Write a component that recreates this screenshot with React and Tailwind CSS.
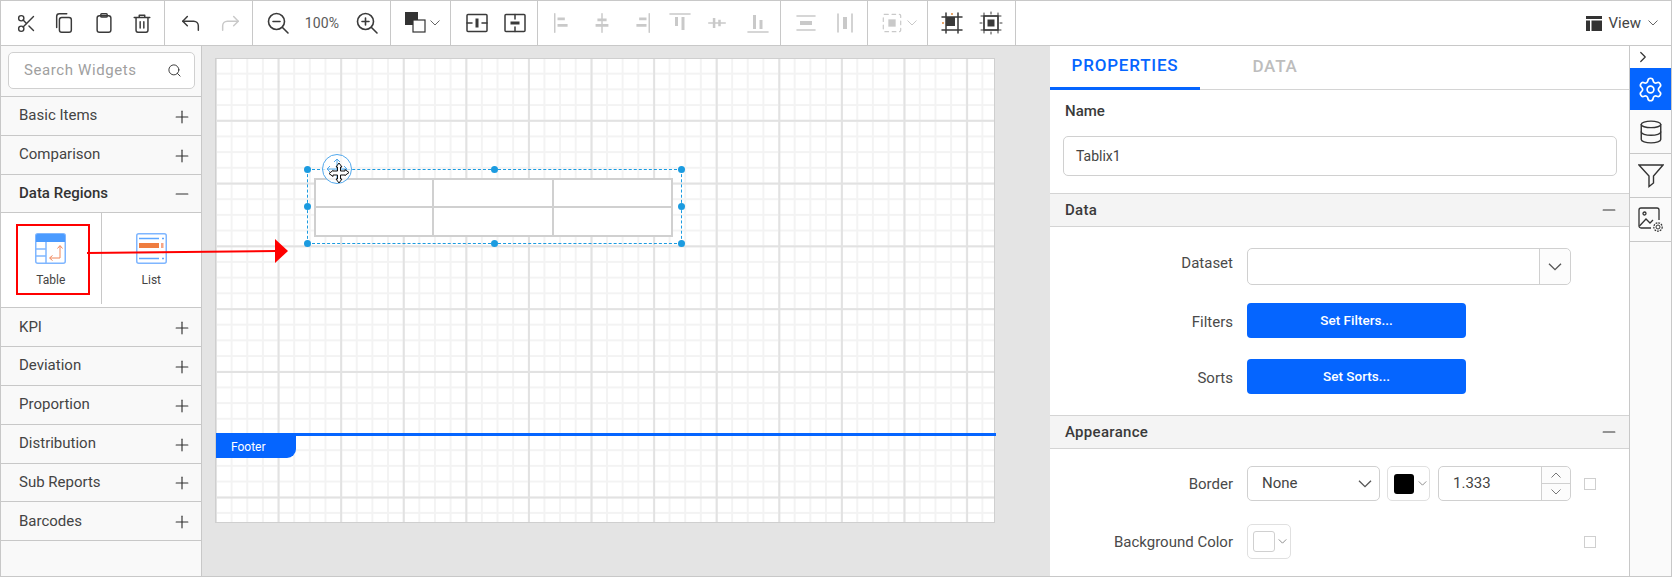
import React from "react";
import { Scissors, ChevronRight, Search, Plus, Minus, Settings, Database } from "lucide-react";

const Svg = ({ size = 24, className = "", children, fill = "none", sw = 1.6 }) => (
  <svg width={size} height={size} viewBox="0 0 24 24" fill={fill} stroke="currentColor" strokeWidth={sw} strokeLinecap="round" strokeLinejoin="round" className={className}>
    {children}
  </svg>
);

const Btn = ({ children, className = "" }) => (
  <div className={`w-[39px] h-full flex items-center justify-center shrink-0 text-[#3a3a3a] ${className}`}>{children}</div>
);

const Off = ({ children }) => <Btn className="text-[#c9c9c9]">{children}</Btn>;

const Group = ({ className, children }) => (
  <div className={`h-full flex items-center shrink-0 border-r border-[#c8c8c8] ${className}`}>{children}</div>
);

const Chev = ({ className = "" }) => (
  <svg width="10" height="6" viewBox="0 0 10 6" fill="none" stroke="currentColor" strokeWidth="1" className={className}>
    <path d="M0.5 0.5 L5 5 L9.5 0.5" />
  </svg>
);

function Toolbar() {
  return (
    <div className="h-[45px] flex border-b border-[#c8c8c8] bg-white shrink-0">
      <Group className="w-[164px] pl-[6px]">
        <Btn><Scissors size={21} strokeWidth={1.6} /></Btn>
        <Btn className="-ml-[2px]"><Svg size={22}><rect x="7" y="6" width="13" height="16" rx="2.5" /><path d="M4 17V5a3 3 0 0 1 3-3h8" /></Svg></Btn>
        <Btn className="ml-px"><Svg size={22}><rect x="4.5" y="4" width="15" height="18" rx="2.5" /><rect x="8.5" y="2" width="7" height="3.5" rx="1" /></Svg></Btn>
        <Btn className="-ml-px"><Svg size={22}><path d="M3.5 6h17M9 6V3.5h6V6M5.5 6v14a2 2 0 0 0 2 2h9a2 2 0 0 0 2-2V6M10 10.5v7M14 10.5v7" /></Svg></Btn>
      </Group>
      <Group className="w-[88px] pl-[6px]">
        <Btn><Svg size={22}><path d="M8 5 L3 10 L8 15" /><path d="M3 10 H15 a5 5 0 0 1 5 5 V20" /></Svg></Btn>
        <Off><Svg size={22}><path d="M16 5 L21 10 L16 15" /><path d="M21 10 H9 a5 5 0 0 0 -5 5 V20" /></Svg></Off>
      </Group>
      <Group className="w-[138px] pl-[5px]">
        <Btn><Svg size={24}><circle cx="10.5" cy="10.5" r="8" /><path d="M7 10.5h7M16.5 16.5L22 22" /></Svg></Btn>
        <div className="w-[50px] text-center text-[14px] tracking-[0.2px] text-[#5a5a5a]">100%</div>
        <Btn><Svg size={24}><circle cx="10.5" cy="10.5" r="8" /><path d="M7 10.5h7M10.5 7v7M16.5 16.5L22 22" /></Svg></Btn>
      </Group>
      <Group className="w-[60px] pl-[14px] gap-[3px]">
        <svg width="22" height="22" viewBox="0 0 22 22" className="shrink-0">
          <rect x="0" y="0" width="13" height="13" fill="#333" />
          <rect x="8" y="8" width="12" height="12" fill="#fff" stroke="#333" strokeWidth="1.2" />
        </svg>
        <Chev className="text-[#666]" />
      </Group>
      <Group className="w-[87px] pl-[6px]">
        <Btn><Svg size={24} sw={1.5}><rect x="2" y="3.5" width="20" height="17" rx="1" /><path d="M2 12h5M17 12h5" /><rect x="10.5" y="7.5" width="3" height="9" fill="currentColor" stroke="none" /></Svg></Btn>
        <Btn className="-ml-px"><Svg size={24} sw={1.5}><rect x="2" y="3.5" width="20" height="17" rx="1" /><path d="M12 3.5v4.5M12 16v4.5" /><rect x="7.5" y="10.5" width="9" height="3" fill="currentColor" stroke="none" /></Svg></Btn>
      </Group>
      <Group className="w-[243px] pl-[5px]">
        <Off><Svg size={22}><path d="M3 2v20" /><path d="M6 7.5h8M6 14.5h11" strokeWidth="3" strokeLinecap="butt" /></Svg></Off>
        <Off><Svg size={22}><path d="M12 2v20" /><path d="M7 8.5h10M5 14.5h14" strokeWidth="3" strokeLinecap="butt" /></Svg></Off>
        <Off><Svg size={22}><path d="M21 2v20" /><path d="M10 7.5h8M7 14.5h11" strokeWidth="3" strokeLinecap="butt" /></Svg></Off>
        <Off><Svg size={24}><path d="M2 3h20" /><path d="M8.5 6v9M15 6v13" strokeWidth="3" strokeLinecap="butt" /></Svg></Off>
        <Btn className="-ml-[2px] text-[#c9c9c9]"><Svg size={20}><path d="M2 12h20" /><path d="M8.5 6v12M15 8v8" strokeWidth="3" strokeLinecap="butt" /></Svg></Btn>
        <Btn className="ml-[2px] text-[#c9c9c9]"><Svg size={24}><path d="M2 21h20" /><path d="M8.5 4v14M15 9v9" strokeWidth="3" strokeLinecap="butt" /></Svg></Btn>
      </Group>
      <Group className="w-[87px] pl-[5px]">
        <Off><Svg size={24}><path d="M3 5h18M3 19h18" /><path d="M6 12h12" strokeWidth="4" strokeLinecap="butt" /></Svg></Off>
        <Off><Svg size={24}><path d="M5 3v18M19 3v18" /><path d="M12 6v12" strokeWidth="4" strokeLinecap="butt" /></Svg></Off>
      </Group>
      <Group className="w-[60px] pl-[13px] gap-[4px] text-[#c9c9c9]">
        <Svg size={22} sw={1.3}>
          <rect x="2.5" y="2.5" width="19" height="19" rx="1.5" strokeDasharray="4 4" />
          <rect x="8" y="8" width="8" height="8" fill="currentColor" stroke="none" />
        </Svg>
        <Chev />
      </Group>
      <Group className="w-[88px] pl-[4px]">
        <Btn><Svg size={24} sw={1.5}><path d="M6 2v20M18 2v20M2 6h20M2 19h20" /><rect x="6" y="6" width="9" height="9" fill="currentColor" stroke="none" /><path d="M12 3h0M3 12h0" stroke="#e08a3c" strokeWidth="2" /></Svg></Btn>
        <Btn><Svg size={24} sw={1.5}><rect x="5" y="5" width="14" height="14" /><rect x="8.5" y="8.5" width="7" height="7" fill="currentColor" stroke="none" /><path d="M12 1v2M12 21v2M1 12h2M21 12h2M5 2v20M19 2v20M2 5h20M2 19h20" strokeWidth="1" /></Svg></Btn>
      </Group>
      <div className="flex-1 h-full flex items-center justify-end pr-[13px] text-[15px] text-[#444]">
        <svg width="16" height="15" viewBox="0 0 16 15" className="mr-[7px]">
          <rect x="0" y="0" width="16" height="3" fill="#333" />
          <rect x="0" y="4.5" width="4" height="10.5" fill="#333" />
          <rect x="5.5" y="4.5" width="10.5" height="10.5" fill="#333" />
        </svg>
        <span>View</span>
        <Chev className="ml-[7px] text-[#666]" />
      </div>
    </div>
  );
}

const Row = ({ label, open = false }) => (
  <div className="h-[38.8px] shrink-0 flex items-center justify-between pl-[18px] pr-[9px] border-b border-[#c8c8c8]">
    <span className={`text-[15px] -mt-[1px] ${open ? "font-medium text-[#333]" : "text-[#444]"}`}>{label}</span>
    {open ? <Minus size={20} strokeWidth={1.4} className="text-[#333] mt-[2px]" /> : <Plus size={20} strokeWidth={1.4} className="text-[#333] mt-[2px]" />}
  </div>
);

const TableIcon = () => (
  <svg width="31" height="31" viewBox="0 0 31 31" fill="none">
    <rect x="0.75" y="0.75" width="29.5" height="29.5" rx="2" stroke="#7fb6ff" strokeWidth="1.5" />
    <path d="M1 2.5a1.5 1.5 0 0 1 1.5-1.5h26a1.5 1.5 0 0 1 1.5 1.5V9H1z" fill="#4b9bff" />
    <path d="M1 16h10M1 23h10M11 9v21" stroke="#7fb6ff" strokeWidth="1.5" />
    <path d="M25 13v12H15M22.5 15.5L25 12.5l2.5 3M17.5 22.5L14.5 25l3 2.5" stroke="#f0865a" strokeWidth="1" />
  </svg>
);

const ListIcon = () => (
  <svg width="31" height="31" viewBox="0 0 31 31" fill="none">
    <rect x="0.75" y="0.75" width="29.5" height="29.5" rx="2" stroke="#7fb6ff" strokeWidth="1.5" />
    <path d="M3 5.5h20M26 5.5h2M3 25.5h20M26 25.5h2" stroke="#5ea6ff" strokeWidth="1.5" />
    <rect x="3" y="10" width="20" height="5" fill="#ef7d3f" />
    <rect x="25" y="10" width="2.5" height="5" fill="#f6a586" />
    <path d="M3 19.5h20M26 19.5h2" stroke="#c5d9f5" strokeWidth="1.5" />
  </svg>
);

function LeftPanel() {
  return (
    <div className="w-[201px] shrink-0 bg-[#f9f9f9] border-r border-[#c8c8c8] flex flex-col">
      <div className="h-[51px] shrink-0 border-b border-[#c8c8c8] pt-[6px] pl-[7px]">
        <div className="w-[187px] h-[37px] bg-white border border-[#d0d0d0] rounded-[5px] flex items-center justify-between pl-[15px] pr-[12px]">
          <span className="text-[15px] tracking-[0.6px] text-[#a0a0a0]">Search Widgets</span>
          <Search size={15} strokeWidth={1.5} className="text-[#333]" />
        </div>
      </div>
      <Row label="Basic Items" />
      <Row label="Comparison" />
      <Row label="Data Regions" open />
      <div className="h-[95px] shrink-0 border-b border-[#c8c8c8] bg-white flex pb-[3px]">
        <div className="w-[101px] border-r border-[#c8c8c8] flex flex-col items-center pt-[20px]">
          <TableIcon />
          <span className="mt-[7px] text-[12px] text-[#444]">Table</span>
        </div>
        <div className="w-[100px] flex flex-col items-center pt-[20px]">
          <ListIcon />
          <span className="mt-[7px] text-[12px] text-[#444]">List</span>
        </div>
      </div>
      <Row label="KPI" />
      <Row label="Deviation" />
      <Row label="Proportion" />
      <Row label="Distribution" />
      <Row label="Sub Reports" />
      <Row label="Barcodes" />
    </div>
  );
}

const Handle = ({ className }) => <div className={`absolute w-[7px] h-[7px] rounded-full bg-[#1b9be0] ${className}`} />;

function Selection() {
  return (
    <div className="absolute left-[91px] top-[110px] w-[375px] h-[75px] border border-dashed border-[#1b9be0] p-[6px] pt-[8px]">
      <div className="w-[359px] h-[59px] bg-white border-2 border-[#d0d0d0] grid grid-cols-[118px_120px_1fr] grid-rows-2">
        <div className="border-r-2 border-b-2 border-[#d0d0d0]" />
        <div className="border-r-2 border-b-2 border-[#d0d0d0]" />
        <div className="border-b-2 border-[#d0d0d0]" />
        <div className="border-r-2 border-[#d0d0d0]" />
        <div className="border-r-2 border-[#d0d0d0]" />
        <div />
      </div>
      <Handle className="-left-[4px] -top-[4px]" />
      <Handle className="left-[183px] -top-[4px]" />
      <Handle className="-right-[4px] -top-[4px]" />
      <Handle className="-left-[4px] top-[33px]" />
      <Handle className="-right-[4px] top-[33px]" />
      <Handle className="-left-[4px] -bottom-[4px]" />
      <Handle className="left-[183px] -bottom-[4px]" />
      <Handle className="-right-[4px] -bottom-[4px]" />
      <svg width="34" height="42" viewBox="0 0 34 42" fill="none" className="absolute left-[13px] -top-[16px]">
        <circle cx="16" cy="15" r="14.5" fill="#fff" fillOpacity="0.7" stroke="#52a8ec" strokeWidth="1" />
        <path d="M16 5v20M6 15h20M13 8l3-3 3 3M9 12l-3 3 3 3M23 12l3 3-3 3" stroke="#52a8ec" strokeWidth="1" />
        <path d="M18 14l3-4 3 4h-1.5v4H27v-1.5l4 3-4 3V22h-4.5v4H24l-3 4-3-4h1.5v-4H15v1.5l-4-3 4-3V18h4.5v-4z" fill="#fff" stroke="#111" strokeWidth="1" strokeLinejoin="miter" transform="translate(-3 -1)" />
      </svg>
    </div>
  );
}

function Workspace() {
  return (
    <div className="w-[848px] shrink-0 bg-[#e4e4e4] pt-[12px] pl-[13px]">
      <div className="relative w-[780px] h-[465px] border border-[#cfcfcf] bg-white bg-[linear-gradient(to_right,#e2e2e2_2px,transparent_2px),linear-gradient(to_bottom,#e2e2e2_2px,transparent_2px),linear-gradient(to_right,#f3f3f3_2px,transparent_2px),linear-gradient(to_bottom,#f3f3f3_2px,transparent_2px)] bg-size-[62.6px_62.8px,62.6px_62.8px,15.65px_15.7px,15.65px_15.7px] bg-position-[-1px_-2px]">
        <div className="pt-[374px]">
          <div className="h-[3px] w-[780px] bg-[#0565ff]" />
          <div className="w-[80px] h-[22px] bg-[#0565ff] rounded-br-[9px] text-white text-[12px] pl-[15px] pb-px flex items-center">Footer</div>
        </div>
        <Selection />
      </div>
    </div>
  );
}

const Section = ({ label }) => (
  <div className="h-[34px] shrink-0 flex items-center justify-between bg-[#f4f4f4] border-y border-[#d4d4d4] pl-[15px] pr-[10px]">
    <span className="text-[15px] font-medium tracking-[0.3px] text-[#3a3a3a] mt-[1px]">{label}</span>
    <Minus size={20} strokeWidth={1.4} className="text-[#333]" />
  </div>
);

const Label = ({ children, className = "" }) => <div className={`w-[183px] shrink-0 text-right text-[15px] text-[#4a4a4a] ${className}`}>{children}</div>;

const Check = () => <div className="w-[12px] h-[12px] border border-[#cfcfcf] bg-white" />;

function RightPanel() {
  return (
    <div className="w-[579px] shrink-0 bg-white flex flex-col">
      <div className="h-[44px] shrink-0 flex items-stretch border-b border-[#d4d4d4]">
        <div className="w-[150px] -mb-px border-b-[3px] border-[#0565ff] flex items-center justify-center text-[17px] font-medium tracking-[0.8px] text-[#0565ff] pb-[1px]">PROPERTIES</div>
        <div className="w-[150px] flex items-center justify-center text-[17px] font-medium tracking-[0.8px] text-[#bdbdbd] pb-[2px]">DATA</div>
      </div>
      <div className="h-[103px] shrink-0 pl-[13px]">
        <div className="pl-[2px] pt-[12px] text-[15px] font-medium leading-[18px] text-[#3a3a3a]">Name</div>
        <div className="mt-[16px] w-[554px] h-[40px] border border-[#d0d0d0] rounded-[5px] flex items-center pl-[12px] text-[14px] text-[#444]">Tablix1</div>
      </div>
      <Section label="Data" />
      <div className="h-[188px] shrink-0 pt-[21px] flex flex-col">
        <div className="flex items-center h-[37px]">
          <Label className="relative -top-[3px]">Dataset</Label>
          <div className="ml-[14px] w-[324px] h-full border border-[#d0d0d0] rounded-[5px] flex justify-end">
            <div className="w-[31px] h-full border-l border-[#d0d0d0] bg-[#fcfcfc] rounded-r-[5px] flex items-center justify-center"><Chev className="w-[14px] h-[8px] text-[#555]" /></div>
          </div>
        </div>
        <div className="flex items-center h-[35px] mt-[18px]">
          <Label className="pt-[3px]">Filters</Label>
          <div className="ml-[14px] w-[219px] h-full bg-[#0565ff] rounded-[4px] flex items-center justify-center text-white text-[13.5px] font-medium">Set Filters...</div>
        </div>
        <div className="flex items-center h-[35px] mt-[21px]">
          <Label className="pt-[3px]">Sorts</Label>
          <div className="ml-[14px] w-[219px] h-full bg-[#0565ff] rounded-[4px] flex items-center justify-center text-white text-[13.5px] font-medium">Set Sorts...</div>
        </div>
      </div>
      <Section label="Appearance" />
      <div className="flex-1 pt-[17px] flex flex-col">
        <div className="flex items-center h-[35px]">
          <Label className="pt-px">Border</Label>
          <div className="ml-[14px] w-[133px] h-full border border-[#d0d0d0] rounded-[5px] flex items-center justify-between pl-[14px] pr-[7px] text-[15px] text-[#444]">
            <span>None</span>
            <Chev className="w-[14px] h-[8px] text-[#555]" />
          </div>
          <div className="ml-[7px] w-[43px] h-full border border-[#e0e0e0] rounded-[5px] flex items-center pl-[6px] gap-[4px]">
            <div className="w-[20px] h-[20px] bg-black rounded-[3px]" />
            <Chev className="w-[9px] h-[5px] text-[#777]" />
          </div>
          <div className="ml-[8px] w-[133px] h-full border border-[#d0d0d0] rounded-[5px] flex items-stretch">
            <div className="w-[102px] flex items-center pl-[14px] text-[15px] text-[#444]">1.333</div>
            <div className="flex-1 border-l border-[#d0d0d0] flex flex-col bg-[#fcfcfc] rounded-r-[5px]">
              <div className="flex-1 flex items-center justify-center border-b border-[#d0d0d0] text-[#777]"><Chev className="w-[10px] h-[6px] rotate-180" /></div>
              <div className="flex-1 flex items-center justify-center text-[#777]"><Chev className="w-[10px] h-[6px]" /></div>
            </div>
          </div>
          <div className="ml-[13px]"><Check /></div>
        </div>
        <div className="flex items-center h-[35px] mt-[23px]">
          <Label className="pt-px">Background Color</Label>
          <div className="ml-[14px] w-[44px] h-full border border-[#e0e0e0] rounded-[5px] flex items-center pl-[5px] gap-[3px]">
            <div className="w-[22px] h-[21px] bg-white border border-[#d0d0d0] rounded-[3px]" />
            <Chev className="w-[9px] h-[5px] text-[#777]" />
          </div>
          <div className="ml-[293px]"><Check /></div>
        </div>
      </div>
    </div>
  );
}

const SideTile = ({ children, className = "" }) => (
  <div className={`h-[44px] shrink-0 flex items-center justify-center border-b border-[#c8c8c8] ${className}`}>{children}</div>
);

function Sidebar() {
  return (
    <div className="flex-1 border-l border-[#c8c8c8] bg-[#fafafa] flex flex-col">
      <div className="h-[22px] shrink-0 bg-white flex items-center pl-[4px] text-[#333]"><ChevronRight size={18} strokeWidth={1.6} /></div>
      <div className="h-[42px] shrink-0 bg-[#0565ff] flex items-center justify-center text-white"><Settings size={27} strokeWidth={1.5} /></div>
      <SideTile className="text-[#333]"><Database size={26} strokeWidth={1.3} /></SideTile>
      <SideTile className="text-[#333]">
        <svg width="26" height="24" viewBox="0 0 26 24" fill="none" stroke="currentColor" strokeWidth="1.4" strokeLinejoin="miter"><path d="M1 1h24L15.5 12v7l-4.5 3.5V12z" /></svg>
      </SideTile>
      <SideTile className="text-[#333]">
        <svg width="26" height="26" viewBox="0 0 26 26" fill="none" stroke="currentColor" strokeWidth="1.3">
          <path d="M13 21H3a2 2 0 0 1-2-2V3a2 2 0 0 1 2-2h16a2 2 0 0 1 2 2v10" />
          <circle cx="6.5" cy="6.5" r="1.5" />
          <path d="M1.5 19L8 12l4 4 3-3" />
          <circle cx="20" cy="20" r="2" strokeWidth="1" />
          <circle cx="20" cy="20" r="4.2" strokeWidth="1.2" strokeDasharray="1.8 1" />
        </svg>
      </SideTile>
    </div>
  );
}

export default function App() {
  return (
    <div className="relative w-[1672px] h-[577px] border border-[#c8c8c8] bg-white flex flex-col overflow-hidden font-['Roboto',sans-serif]">
      <Toolbar />
      <div className="flex-1 min-h-0 flex">
        <LeftPanel />
        <Workspace />
        <RightPanel />
        <Sidebar />
      </div>
      <div className="absolute left-[15px] top-[223px] w-[74px] h-[71px] border-2 border-[#f00] pointer-events-none" />
      <svg width="210" height="30" viewBox="0 0 210 30" className="absolute left-[84px] top-[237px] pointer-events-none">
        <path d="M2 15 L192 13" stroke="#f00" strokeWidth="2" fill="none" />
        <path d="M190 1 L203 13 L190 25z" fill="#f00" />
      </svg>
    </div>
  );
}
